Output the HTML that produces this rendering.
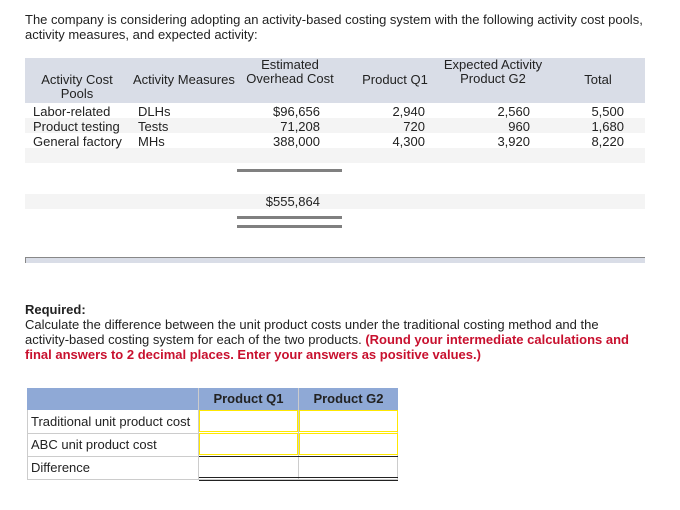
<!DOCTYPE html>
<html><head><style>
body{margin:0;width:680px;height:510px;background:#fff;font-family:"Liberation Sans",Arial,sans-serif;font-size:13px;color:#222;position:relative;overflow:hidden}
.a{position:absolute;white-space:nowrap;line-height:14px}
.r{text-align:right}
.c{text-align:center}
</style></head><body>
<div class="a" style="left:25px;top:12px;font-size:13px;line-height:15px">The company is considering adopting an activity-based costing system with the following activity cost pools,<br>activity measures, and expected activity:</div>

<div class="a" style="left:25px;top:58px;width:620px;height:45px;background:#d9dde7"></div>
<div class="a" style="left:25px;top:118px;width:620px;height:15px;background:#f4f4f4"></div>
<div class="a" style="left:25px;top:148px;width:620px;height:15px;background:#f4f4f4"></div>
<div class="a" style="left:25px;top:194px;width:620px;height:15px;background:#f4f4f4"></div>

<div class="a c" style="left:30px;top:73px;width:94px">Activity Cost<br>Pools</div>
<div class="a" style="left:133px;top:73px">Activity Measures</div>
<div class="a c" style="left:240px;top:58px;width:100px">Estimated<br>Overhead Cost</div>
<div class="a c" style="left:355px;top:73px;width:80px">Product Q1</div>
<div class="a c" style="left:438px;top:58px;width:110px">Expected Activity<br>Product G2</div>
<div class="a c" style="left:568px;top:73px;width:60px">Total</div>

<div class="a" style="left:33px;top:104px;line-height:15px">Labor-related<br>Product testing<br>General factory</div>
<div class="a" style="left:138px;top:104px;line-height:15px">DLHs<br>Tests<br>MHs</div>
<div class="a r" style="left:250px;top:104px;width:70px;line-height:15px">$96,656<br>71,208<br>388,000</div>
<div class="a r" style="left:360px;top:104px;width:65px;line-height:15px">2,940<br>720<br>4,300</div>
<div class="a r" style="left:465px;top:104px;width:65px;line-height:15px">2,560<br>960<br>3,920</div>
<div class="a r" style="left:560px;top:104px;width:64px;line-height:15px">5,500<br>1,680<br>8,220</div>

<div class="a" style="left:237px;top:169px;width:105px;height:3px;background:#808080"></div>
<div class="a r" style="left:250px;top:195px;width:70px">$555,864</div>
<div class="a" style="left:237px;top:216px;width:105px;height:3px;background:#808080"></div>
<div class="a" style="left:237px;top:225px;width:105px;height:3px;background:#808080"></div>

<div class="a" style="left:25px;top:257px;width:620px;height:6px;background:#d9dde7;border-top:1px solid #888;border-left:1px solid #888;box-sizing:border-box"></div>

<div class="a" style="left:25px;top:302px;font-size:13px;line-height:15px"><b>Required:</b><br>Calculate the difference between the unit product costs under the traditional costing method and the<br>activity-based costing system for each of the two products. <b style="color:#c8102e">(Round your intermediate calculations and</b><br><b style="color:#c8102e">final answers to 2 decimal places. Enter your answers as positive values.)</b></div>

<div class="a" style="left:27px;top:388px;width:371px;height:92px;border:1px solid #ccc;box-sizing:border-box"></div>
<div class="a" style="left:27px;top:388px;width:371px;height:22px;background:#8fa9d6"></div>
<div class="a" style="left:198px;top:388px;width:1px;height:92px;background:#ccc"></div>
<div class="a" style="left:298px;top:388px;width:1px;height:92px;background:#ccc"></div>
<div class="a" style="left:27px;top:433px;width:171px;height:1px;background:#ccc"></div>
<div class="a" style="left:27px;top:456px;width:171px;height:1px;background:#ccc"></div>
<div class="a c" style="left:199px;top:392px;width:99px;font-weight:bold">Product Q1</div>
<div class="a c" style="left:299px;top:392px;width:99px;font-weight:bold">Product G2</div>
<div class="a" style="left:31px;top:415px">Traditional unit product cost</div>
<div class="a" style="left:31px;top:438px">ABC unit product cost</div>
<div class="a" style="left:31px;top:461px">Difference</div>
<div class="a" style="left:199px;top:410px;width:99px;height:22px;border:1.5px solid #ffe800;box-sizing:border-box"></div>
<div class="a" style="left:299px;top:410px;width:99px;height:22px;border:1.5px solid #ffe800;box-sizing:border-box"></div>
<div class="a" style="left:199px;top:433px;width:99px;height:22px;border:1.5px solid #ffe800;box-sizing:border-box"></div>
<div class="a" style="left:299px;top:433px;width:99px;height:22px;border:1.5px solid #ffe800;box-sizing:border-box"></div>
<div class="a" style="left:199px;top:456px;width:199px;height:1px;background:#222"></div>
<div class="a" style="left:199px;top:477px;width:199px;height:1px;background:#222"></div>
<div class="a" style="left:199px;top:480px;width:199px;height:1px;background:#222"></div>
</body></html>
